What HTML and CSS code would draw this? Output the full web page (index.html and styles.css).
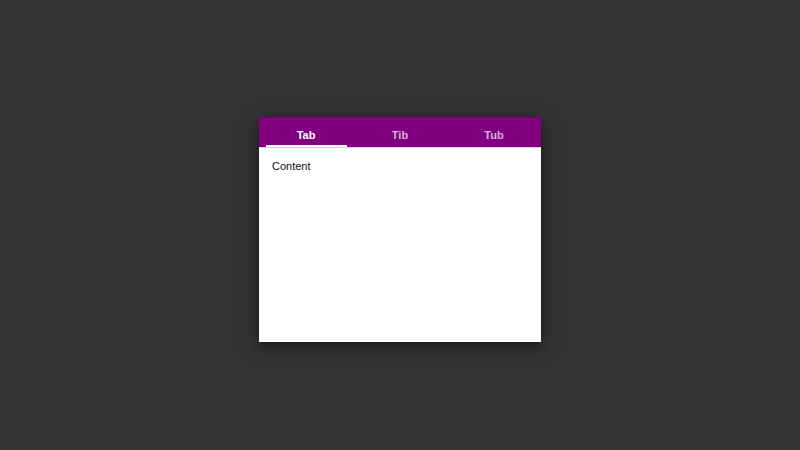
FILE: index.html
```html
<!DOCTYPE html>
<html>
<head>
<meta charset="utf-8">
<link rel="stylesheet" href="styles.css">
</head>
<body>
<div class="card">
  <div class="tabs">
    <div class="tab active"><span>Tab</span></div>
    <div class="tab"><span>Tib</span></div>
    <div class="tab"><span>Tub</span></div>
  </div>
  <div class="content">Content</div>
</div>
</body>
</html>
```

FILE: styles.css
```css
html, body {
  margin: 0;
  padding: 0;
  height: 100%;
}
body {
  background: #333333;
  font-family: "Liberation Sans", Arial, sans-serif;
  display: flex;
  justify-content: center;
  align-items: flex-start;
}
.card {
  margin-top: 117px;
  width: 282px;
  height: 225px;
  background: #ffffff;
  box-shadow: 0 4px 14px rgba(0, 0, 0, 0.55);
  display: flex;
  flex-direction: column;
}
.tabs {
  display: flex;
  height: 31px;
  background: #800080;
  border-bottom: 1px solid #e6cce6;
  box-sizing: border-box;
}
.tab {
  flex: 1;
  display: flex;
  justify-content: center;
  align-items: center;
  font-size: 11px;
  font-weight: bold;
  color: rgba(255, 255, 255, 0.7);
  position: relative;
  padding-top: 5px;
}
.tab.active {
  color: #ffffff;
}
.tab.active::after {
  content: "";
  position: absolute;
  left: 7px;
  right: 6px;
  bottom: 0;
  height: 2px;
  background: #ffffff;
}
.content {
  padding: 12px 13px;
  font-size: 11px;
  color: #111111;
}
```
